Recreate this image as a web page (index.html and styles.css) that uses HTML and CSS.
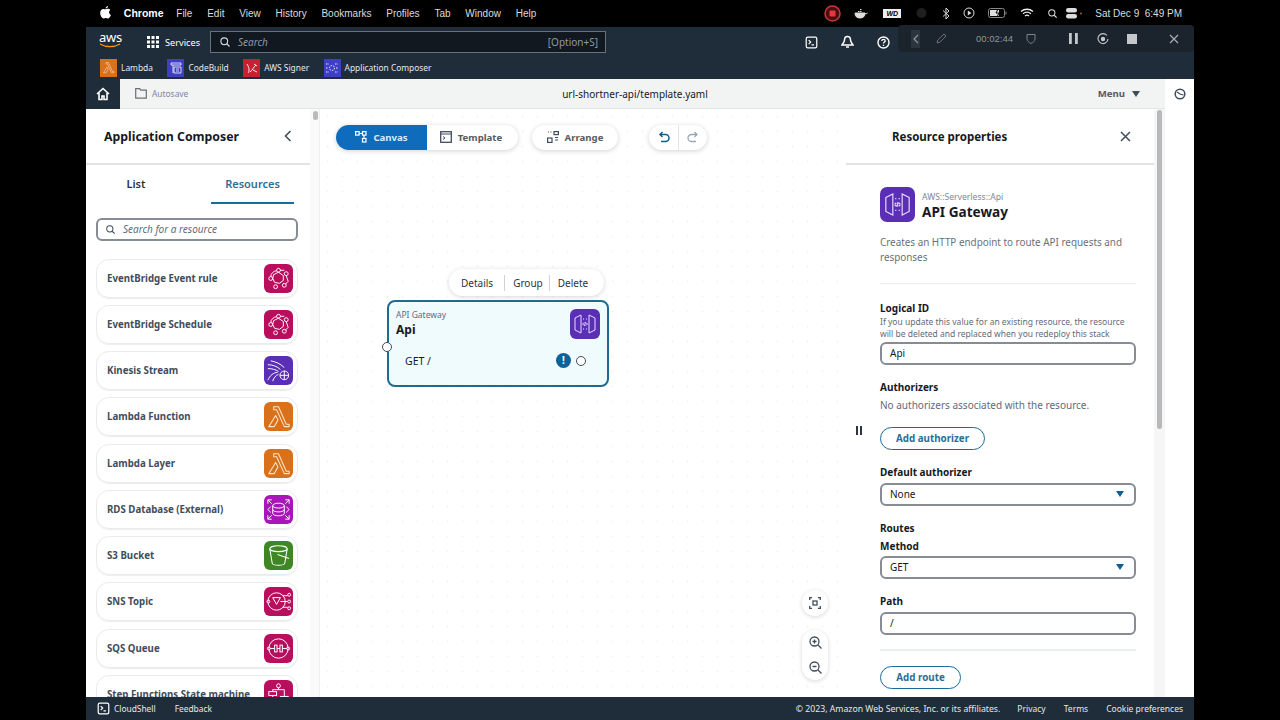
FILE: index.html
```html
<!DOCTYPE html>
<html lang="en">
<head>
    <meta charset="UTF-8">
    <title>Application Composer</title>
    <link rel="stylesheet" href="styles.css">
</head>
<body>
    <!-- shared icons -->
    <svg class="defs" width="0" height="0">
        <symbol id="i-event" viewBox="0 0 30 30"><g fill="none" stroke="#fff" stroke-width="1"><circle cx="15" cy="6.5" r="2"/><circle cx="7" cy="15" r="2"/><circle cx="23" cy="10" r="2"/><circle cx="21" cy="22" r="2"/><circle cx="12" cy="23.5" r="2"/><path d="M15 8.5 L10 11 L9 15 L11 19 L16 20 L20 17 L20 12 Z"/><path d="M17 6.5h4M23 12l2 6-3 3M7 13c0-3 3-6 6-6"/></g></symbol>
        <symbol id="i-kinesis" viewBox="0 0 30 30"><g fill="none" stroke="#fff" stroke-width="1"><path d="M7 5c5 1 10 3 14 7M4 9c5 0 10 2 13 5M4 13c4 0 8 1 11 3M4 25c2-5 6-8 10-8M9 26c1-3 3-6 6-7"/><circle cx="21" cy="20" r="4.5"/><path d="M16.5 20h9M21 15.500v9"/></g></symbol>
        <symbol id="i-lambda" viewBox="0 0 30 30"><path d="M10 5h5l8 18h3v2.500h-5L13 8h-3zM12 14l2.500 4.500-4 7H5z" fill="none" stroke="#ffe3c4" stroke-width="1.100" stroke-linejoin="round"/></symbol>
        <symbol id="i-rds" viewBox="0 0 30 30"><g fill="none" stroke="#fff" stroke-width="1"><ellipse cx="15" cy="11" rx="6" ry="2.500"/><path d="M9 11v8c0 1.500 3 2.500 6 2.500s6-1 6-2.500v-8M9 15c0 1.500 3 2.500 6 2.500s6-1 6-2.500"/><path d="M4 5h4M4 5v4M4 5l4 4M26 5h-4M26 5v4M26 5l-4 4M4 25h4M4 25v-4M4 25l4-4M26 25h-4M26 25v-4M26 25l-4-4M7 12l-3 3 3 3M23 12l3 3-3 3"/></g></symbol>
        <symbol id="i-s3" viewBox="0 0 30 30"><g fill="none" stroke="#fff" stroke-width="1.100"><ellipse cx="15" cy="8" rx="9" ry="3"/><path d="M6 8l2.500 15c.3 1.500 3 2 6.500 2s6.200-.5 6.500-2L24 8M14 14l12 4"/></g></symbol>
        <symbol id="i-sns" viewBox="0 0 30 30"><g fill="none" stroke="#fff" stroke-width="1"><circle cx="13" cy="15" r="9"/><path d="M9 11h8l-4 7z"/><circle cx="4.500" cy="15" r="1.500"/><circle cx="26" cy="8" r="1.500"/><circle cx="26" cy="15" r="1.500"/><circle cx="26" cy="22" r="1.500"/><path d="M17 15h7.500M19 9h5.500M19 21h5.500"/></g></symbol>
        <symbol id="i-sqs" viewBox="0 0 30 30"><g fill="none" stroke="#fff" stroke-width="1"><circle cx="15" cy="15" r="10"/><rect x="11" y="11.500" width="2.500" height="7"/><rect x="16.500" y="11.500" width="2.500" height="7"/><path d="M6.500 15H11M19 15h4.500M13.500 15h3"/><circle cx="5" cy="15" r="1.500"/><circle cx="25" cy="15" r="1.500"/></g></symbol>
        <symbol id="i-step" viewBox="0 0 30 30"><g fill="none" stroke="#fff" stroke-width="1"><circle cx="15" cy="6" r="2"/><rect x="5" y="12" width="8" height="4"/><rect x="17" y="17" width="8" height="4"/><rect x="5" y="22" width="8" height="4"/><path d="M15 8v2H9v2M9 16v6M15 10h6v7"/></g></symbol>
        <symbol id="i-api" viewBox="0 0 30 30"><g fill="none" stroke="#e9dcff" stroke-width="1"><path d="M5 9l6-3v18l-6-3zM25 9l-6-3v18l6-3z"/><path d="M13 10h1.500M16 10h1.500M13 20h1.500M16 20h1.500" stroke-dasharray="1 1"/><path d="M12.500 15l1.500-1.500M12.500 15l1.500 1.500M17.500 15L16 13.500M17.500 15L16 16.500M15.500 13l-1 4"/></g></symbol>
        <symbol id="i-shell" viewBox="0 0 16 16"><rect x="1.500" y="1.500" width="13" height="13" rx="2" fill="none" stroke="currentColor" stroke-width="1.500"/><path d="M4.500 5l2.500 2.500-2.500 2.500M8 11h3" fill="none" stroke="currentColor" stroke-width="1.500"/></symbol>
        <symbol id="i-search" viewBox="0 0 16 16"><circle cx="7" cy="7" r="4.500" fill="none" stroke="currentColor" stroke-width="1.500"/><path d="M10.500 10.500L14 14" stroke="currentColor" stroke-width="1.700"/></symbol>
    </svg>

    <header class="menubar">
        <nav class="menu-left">
            <svg class="apple" width="11" height="13" viewBox="0 0 11 13"><path d="M8 0c0 1.300-1 2.600-2.400 2.600C5.500 1.300 6.700.2 8 0zM5.600 3.300c.6 0 1.300-.5 2.300-.5 1 0 1.900.5 2.500 1.300-2 1.200-1.700 3.900.5 4.800-.6 1.500-1.700 3.600-3 3.600-.8 0-1.200-.5-2.100-.5-.9 0-1.400.5-2.100.5C2 12.500.2 9.500.2 7c0-2.600 1.600-4.100 3.100-4.100 1 0 1.700.4 2.300.4z" fill="#fff"/></svg>
            <b>Chrome</b><span>File</span><span>Edit</span><span>View</span><span>History</span><span>Bookmarks</span><span>Profiles</span><span>Tab</span><span>Window</span><span>Help</span>
        </nav>
        <div class="menu-right">
            <svg width="17" height="17" viewBox="0 0 17 17"><circle cx="8.500" cy="8.500" r="7.500" fill="#4a0d10" stroke="#c9373c" stroke-width="1.500"/><rect x="5.500" y="5.500" width="6" height="6" rx="1" fill="#e0393e"/></svg>
            <svg class="ms-1" width="14" height="11" viewBox="0 0 14 11"><path d="M1 5h10c0 3-1.500 5-5 5S1 8 1 5zM11 5.500c1 .5 2 0 2.500-.5" fill="#ddd" stroke="#ddd"/><path d="M4 3.500h1.500M6 3.500h1.500M6 1.500h1.500" stroke="#ddd" stroke-width="1.200"/></svg>
            <span class="wd ms-2">WD</span>
            <svg class="ms-2" width="11" height="12" viewBox="0 0 11 12"><circle cx="5.500" cy="6" r="5" fill="#1f1f1f"/></svg>
            <svg class="ms-2" width="8" height="13" viewBox="0 0 8 13"><path d="M1 3.500l6 5.500-3 3V1l3 3-6 5.500" fill="none" stroke="#ddd"/></svg>
            <svg class="ms-1" width="12" height="12" viewBox="0 0 12 12"><circle cx="6" cy="6" r="5" fill="none" stroke="#ddd"/><path d="M4.800 3.500v5L8.500 6z" fill="#ddd"/></svg>
            <svg class="ms-1" width="19" height="10" viewBox="0 0 19 10"><rect x=".5" y=".5" width="16" height="9" rx="2" fill="none" stroke="#888"/><rect x="2" y="2" width="9" height="6" fill="#ddd"/><path d="M18 3.500v3" stroke="#888"/><path d="M10 1l-2 4h3l-2 4" fill="none" stroke="#000"/></svg>
            <svg class="ms-1" width="14" height="10" viewBox="0 0 14 10"><path d="M1 3.500c3.500-3 8.500-3 12 0M3 5.800c2.500-2 5.500-2 8 0M5 8c1.200-1 2.800-1 4 0" fill="none" stroke="#eee" stroke-width="1.300"/></svg>
            <svg class="ms-1" width="11" height="11" viewBox="0 0 16 16" color="#ddd"><use href="#i-search"/></svg>
            <svg class="ms-3" width="16" height="11" viewBox="0 0 16 11"><rect x="0" y="0" width="11" height="4.500" rx="2.200" fill="#ddd"/><rect x="0" y="6" width="11" height="4.500" rx="2.200" fill="#ddd"/><circle cx="15" cy="5.500" r="1" fill="#b5562d"/></svg>
            <span class="clock">Sat Dec 9&nbsp; 6:49 PM</span>
        </div>
    </header>

    <div class="console">
        <div class="topnav">
            <div class="aws-logo">
                <span>aws</span>
                <svg width="22" height="5" viewBox="0 0 22 5"><path d="M1 1c6 3.500 14 3.500 20 0" fill="none" stroke="#f90" stroke-width="1.300"/></svg>
            </div>
            <div class="services">
                <svg width="12" height="12" viewBox="0 0 12 12" fill="#fff"><rect width="3" height="3"/><rect x="4.500" width="3" height="3"/><rect x="9" width="3" height="3"/><rect y="4.500" width="3" height="3"/><rect x="4.500" y="4.500" width="3" height="3"/><rect x="9" y="4.500" width="3" height="3"/><rect y="9" width="3" height="3"/><rect x="4.500" y="9" width="3" height="3"/><rect x="9" y="9" width="3" height="3"/></svg>
                <span>Services</span>
            </div>
            <div class="global-search">
                <svg width="12" height="12" color="#d5dbdb"><use href="#i-search"/></svg>
                <em>Search</em>
                <span>[Option+S]</span>
            </div>
            <div class="nav-icons">
                <svg width="13" height="13" color="#fff"><use href="#i-shell"/></svg>
                <svg width="13" height="14" viewBox="0 0 13 14"><path d="M6.500 1.500c2 0 3 1.500 3 3.500 0 2 1.500 3.500 2.500 5H1c1-1.500 2.500-3 2.500-5s1-3.500 3-3.500zM5 12h3" fill="none" stroke="#fff" stroke-width="1.500"/></svg>
                <svg width="13" height="13" viewBox="0 0 13 13"><circle cx="6.500" cy="6.500" r="5.500" fill="none" stroke="#fff" stroke-width="1.400"/><path d="M4.800 5c0-1 .8-1.600 1.700-1.600s1.700.6 1.700 1.500c0 1.200-1.700 1.200-1.700 2.600M6.500 8.700v1.200" fill="none" stroke="#fff" stroke-width="1.300"/></svg>
            </div>
        </div>
        <div class="favorites">
            <a class="fav"><span class="fav-icon orange"><svg width="15" height="15"><use href="#i-lambda"/></svg></span>Lambda</a>
            <a class="fav"><span class="fav-icon indigo"><svg width="14" height="14" viewBox="0 0 14 14"><path d="M2 2h10v2H2zM4 4v8M5 6h7v6H5zM7 8h3M7 10h3" fill="none" stroke="#fff" stroke-width=".8"/></svg></span>CodeBuild</a>
            <a class="fav"><span class="fav-icon crimson"><svg width="14" height="14" viewBox="0 0 14 14"><path d="M2 3c2 3 3 7 1 9M5 11c3-2 4-6 6-7M8 9l4 2M9 3l3 2" fill="none" stroke="#fff" stroke-width=".9"/></svg></span>AWS Signer</a>
            <a class="fav"><span class="fav-icon indigo"><svg width="14" height="14" viewBox="0 0 14 14"><g fill="none" stroke="#fff" stroke-width=".9" stroke-dasharray="1.500 1"><circle cx="7" cy="7" r="2.500"/><path d="M1 3h3M1 7h2M1 11h3M10 3h3M11 7h2M10 11h3"/></g></svg></span>Application Composer</a>
        </div>
        <div class="appbar-row">
            <div class="appbar">
                <button class="home"><svg width="14" height="14" viewBox="0 0 14 14"><path d="M1 7l6-5.500L13 7M3 6v6.500h3V9h2v3.500h3V6" fill="none" stroke="#fff" stroke-width="1.600"/></svg></button>
                <div class="autosave">
                    <svg width="12" height="11" viewBox="0 0 12 11"><path d="M.7.700h4l1 1.500h5.600v8H.7z" fill="none" stroke="#687078" stroke-width="1.200"/></svg>
                    <span>Autosave</span>
                </div>
                <div class="filename">url-shortner-api/template.yaml</div>
                <div class="app-menu"><span>Menu</span><i class="caret grey"></i></div>
            </div>
            <div class="rail-top">
                <svg width="12" height="12" viewBox="0 0 12 12"><circle cx="6" cy="6" r="4.800" fill="none" stroke="#414d5c" stroke-width="1.500"/><path d="M3 4l3 2 3.500 1" fill="none" stroke="#414d5c" stroke-width="1.300"/></svg>
            </div>
        </div>

        <main class="workspace">
            <aside class="left-panel">
                <div class="panel-head">
                    <h2>Application Composer</h2>
                    <svg width="8" height="12" viewBox="0 0 8 12"><path d="M6.500 1L1.500 6l5 5" fill="none" stroke="#414d5c" stroke-width="1.600"/></svg>
                </div>
                <div class="tabs">
                    <span class="tab">List</span>
                    <span class="tab active">Resources</span>
                </div>
                <div class="res-search">
                    <svg width="11" height="11" color="#414d5c"><use href="#i-search"/></svg>
                    <em>Search for a resource</em>
                </div>
                <div class="res-list">
                    <div class="res-card"><span>EventBridge Event rule</span><svg class="res-icon pink" width="29" height="29"><use href="#i-event"/></svg></div>
                    <div class="res-card"><span>EventBridge Schedule</span><svg class="res-icon pink" width="29" height="29"><use href="#i-event"/></svg></div>
                    <div class="res-card"><span>Kinesis Stream</span><svg class="res-icon violet" width="29" height="29"><use href="#i-kinesis"/></svg></div>
                    <div class="res-card"><span>Lambda Function</span><svg class="res-icon orange" width="29" height="29"><use href="#i-lambda"/></svg></div>
                    <div class="res-card"><span>Lambda Layer</span><svg class="res-icon orange" width="29" height="29"><use href="#i-lambda"/></svg></div>
                    <div class="res-card"><span>RDS Database (External)</span><svg class="res-icon magenta" width="29" height="29"><use href="#i-rds"/></svg></div>
                    <div class="res-card"><span>S3 Bucket</span><svg class="res-icon green" width="29" height="29"><use href="#i-s3"/></svg></div>
                    <div class="res-card"><span>SNS Topic</span><svg class="res-icon pink" width="29" height="29"><use href="#i-sns"/></svg></div>
                    <div class="res-card"><span>SQS Queue</span><svg class="res-icon pink" width="29" height="29"><use href="#i-sqs"/></svg></div>
                    <div class="res-card"><span>Step Functions State machine</span><svg class="res-icon pink" width="29" height="29"><use href="#i-step"/></svg></div>
                </div>
            </aside>
            <div class="gutter"><i></i></div>

            <section class="canvas">
                <div class="toolbar">
                    <div class="pill-group">
                        <button class="tool selected canvas-btn">
                            <svg width="12" height="12" viewBox="0 0 12 12"><g fill="none" stroke="#fff" stroke-width="1.200"><rect x=".6" y=".6" width="3.500" height="3.500"/><rect x="7.500" y=".6" width="3.500" height="3.500"/><rect x="7.500" y="7.500" width="3.500" height="3.500"/><path d="M4 2.500h3.500M9 4v3.500"/></g></svg>Canvas
                        </button>
                        <button class="tool template-btn">
                            <svg width="12" height="12" viewBox="0 0 12 12"><rect x=".7" y=".7" width="10.600" height="10.600" fill="none" stroke="#414d5c" stroke-width="1.300"/><path d="M.7 3h10.600M3 5.500l2 1.500-2 1.500" fill="none" stroke="#414d5c"/></svg>Template
                        </button>
                    </div>
                    <div class="pill-group">
                        <button class="tool arrange-btn">
                            <svg width="12" height="12" viewBox="0 0 12 12" fill="none" stroke="#414d5c" stroke-width="1.200"><rect x=".6" y="7" width="4.400" height="4.400"/><rect x="7" y=".6" width="4.400" height="3"/><path d="M1 1h1M3.500 1h1M8 6.500h3M8 9h3" /></svg>Arrange
                        </button>
                    </div>
                    <div class="pill-group history">
                        <button class="tool round"><svg width="12" height="12" viewBox="0 0 12 12"><path d="M4.500 1L2 3.500 4.500 6M2 3.500h5.500a3.500 3.500 0 010 7H3" fill="none" stroke="#0f5f93" stroke-width="1.500"/></svg></button>
                        <button class="tool round"><svg width="12" height="12" viewBox="0 0 12 12"><path d="M7.500 1L10 3.500 7.500 6M10 3.500H4.500a3.500 3.500 0 000 7H9" fill="none" stroke="#9ba7b6" stroke-width="1.300"/></svg></button>
                    </div>
                </div>

                <!-- node sits freely on the canvas -->
                <div class="node-actions"><span>Details</span><span>Group</span><span>Delete</span></div>
                <div class="node">
                    <i class="port port-in"></i>
                    <div class="node-head">
                        <div>
                            <small>API Gateway</small>
                            <strong>Api</strong>
                        </div>
                        <svg class="res-icon violet" width="30" height="30"><use href="#i-api"/></svg>
                    </div>
                    <div class="node-route">
                        <span>GET /</span>
                        <b class="alert">!</b>
                        <i class="port"></i>
                    </div>
                </div>

                <div class="zoom-fit">
                    <svg width="12" height="12" viewBox="0 0 12 12" fill="none" stroke="#414d5c" stroke-width="1.300"><path d="M.7 3V.7H3M9 .7h2.300V3M11.300 9v2.300H9M3 11.300H.7V9"/><rect x="4" y="4" width="4" height="4"/></svg>
                </div>
                <div class="zoom-group">
                    <svg width="13" height="13" viewBox="0 0 13 13" fill="none" stroke="#414d5c" stroke-width="1.300"><circle cx="5.500" cy="5.500" r="4.500"/><path d="M9 9l3.500 3.500M3.500 5.500h4M5.500 3.500v4"/></svg>
                    <svg width="13" height="13" viewBox="0 0 13 13" fill="none" stroke="#414d5c" stroke-width="1.300"><circle cx="5.500" cy="5.500" r="4.500"/><path d="M9 9l3.500 3.500M3.500 5.500h4"/></svg>
                </div>
                <i class="drag-handle"></i>
            </section>

            <aside class="right-panel">
                <div class="props-head">
                    <h2>Resource properties</h2>
                    <svg width="11" height="11" viewBox="0 0 11 11"><path d="M1 1l9 9M10 1l-9 9" stroke="#414d5c" stroke-width="1.500"/></svg>
                </div>
                <div class="props-body">
                    <div class="res-title">
                        <svg class="res-icon violet big" width="35" height="35"><use href="#i-api"/></svg>
                        <div>
                            <small>AWS::Serverless::Api</small>
                            <h3>API Gateway</h3>
                        </div>
                    </div>
                    <p class="res-desc">Creates an HTTP endpoint to route API requests and responses</p>
                    <hr class="rule">
                    <label class="field-label first">Logical ID</label>
                    <p class="help">If you update this value for an existing resource, the resource will be deleted and replaced when you redeploy this stack</p>
                    <div class="input logical">Api</div>
                    <label class="field-label authorizers">Authorizers</label>
                    <p class="empty">No authorizers associated with the resource.</p>
                    <button class="outline add-auth">Add authorizer</button>
                    <label class="field-label default-auth">Default authorizer</label>
                    <div class="input select">None<i class="caret"></i></div>
                    <label class="field-label routes">Routes</label>
                    <label class="field-label method">Method</label>
                    <div class="input select">GET<i class="caret"></i></div>
                    <label class="field-label path">Path</label>
                    <div class="input">/</div>
                    <hr class="rule route-rule">
                    <button class="outline add-route">Add route</button>
                </div>
            </aside>
            <div class="props-scroll"><i></i></div>
            <div class="rail"></div>
        </main>

        <footer class="bottombar">
            <div class="foot-left">
                <svg width="13" height="13" color="#fff"><use href="#i-shell"/></svg>
                <span>CloudShell</span>
                <span class="feedback">Feedback</span>
            </div>
            <div class="foot-right">
                <span class="copy">© 2023, Amazon Web Services, Inc. or its affiliates.</span>
                <span class="privacy">Privacy</span>
                <span class="terms">Terms</span>
                <span class="cookies">Cookie preferences</span>
            </div>
        </footer>
    </div>

    <!-- screen recorder overlay -->
    <div class="recorder">
        <span class="rec-back"><svg width="6" height="10" viewBox="0 0 6 10"><path d="M5 1L1 5l4 4" fill="none" stroke="#8d949c" stroke-width="1.200"/></svg></span>
        <svg class="rec-pen" width="11" height="11" viewBox="0 0 11 11"><path d="M1 10l.8-3L8 1l2 2-6 6.200z" fill="none" stroke="#6b7178"/></svg>
        <span class="rec-time">00:02:44</span>
        <svg class="rec-shield" width="10" height="11" viewBox="0 0 10 11"><path d="M1 1.500h8V6c0 2-2 3.500-4 4.500C3 9.500 1 8 1 6z" fill="none" stroke="#7d848c"/></svg>
        <svg class="rec-pause" width="9" height="11" viewBox="0 0 9 11" fill="#c4c7ca"><rect width="2.800" height="11"/><rect x="6" width="2.800" height="11"/></svg>
        <svg class="rec-restart" width="12" height="12" viewBox="0 0 12 12"><path d="M10 2.500A5 5 0 1011 6" fill="none" stroke="#b8bcc0" stroke-width="1.200"/><circle cx="6" cy="6" r="2.200" fill="#c4c7ca"/></svg>
        <i class="rec-stop"></i>
        <svg class="rec-close" width="10" height="10" viewBox="0 0 10 10"><path d="M1 1l8 8M9 1L1 9" stroke="#a9adb2" stroke-width="1.200"/></svg>
    </div>
</body>
</html>
```

FILE: styles.css
```css
* {
    margin: 0;
    padding: 0;
    box-sizing: border-box;
}
body {
    width: 1280px;
    height: 720px;
    overflow: hidden;
    position: relative;
    background-color: #000;
    font-family: 'Noto Sans', 'Open Sans', sans-serif;
    color: #16191f;
}
svg {
    display: block;
    flex: none;
}
.defs {
    position: absolute;
}
button {
    font-family: inherit;
    border: none;
    background: none;
}

/* mac menu bar */
.menubar {
    height: 27px;
    display: flex;
    align-items: center;
    justify-content: space-between;
    padding: 0 98px 1px 100px;
    font-family: 'Liberation Sans', 'Inter', sans-serif;
    font-size: 10px;
    color: #dcdcdc;
}
.menu-left {
    display: flex;
    align-items: center;
    gap: 14.800px;
}
.menu-left b {
    color: #fff;
    font-size: 10.5px;
    margin-left: -2px;
    margin-right: -2px;
}
.apple {
    margin-top: -2px;
}
.menu-right {
    display: flex;
    align-items: center;
}
.wd {
    width: 18px;
    height: 9px;
    background-color: #eee;
    color: #000;
    font-size: 7px;
    font-weight: 700;
    font-style: italic;
    line-height: 9px;
    text-align: center;
}
.ms-1 { margin-left: 13px; }
.ms-2 { margin-left: 15px; }
.ms-3 { margin-left: 8px; }
.clock {
    margin-left: 13px;
    font-size: 10px;
}

/* console shell */
.console {
    width: 1108px;
    margin-left: 86px;
    height: 693px;
    display: flex;
    flex-direction: column;
    background-color: #fff;
}
.topnav {
    height: 27px;
    background-color: #1f2d3a;
    display: flex;
    align-items: center;
    padding: 3px 0 0 13px;
    flex: none;
}
.aws-logo {
    width: 23px;
    color: #fff;
    font-size: 13px;
    line-height: 11px;
    letter-spacing: -.2px;
}
.aws-logo span {
    display: block;
    margin-top: -4px;
}
.services {
    display: flex;
    align-items: center;
    gap: 6px;
    margin-left: 25px;
    width: 63px;
    color: #fff;
    font-size: 9.200px;
}
.global-search {
    width: 396px;
    height: 22px;
    border: 1px solid #687078;
    background-color: #12181f;
    display: flex;
    align-items: center;
    padding: 0 7px 0 8px;
    font-size: 10px;
    color: #8d99a8;
}
.global-search em {
    margin-left: 7px;
    flex: 1;
}
.nav-icons {
    display: flex;
    align-items: center;
    gap: 23px;
    margin-left: 199px;
}
.favorites {
    height: 25px;
    background-color: #1f2d3a;
    display: flex;
    align-items: center;
    padding: 2px 0 0 14px;
    flex: none;
    color: #e6e8ea;
    font-size: 8.400px;
}
.fav {
    display: flex;
    align-items: center;
    gap: 4px;
    margin-right: 14.500px;
}
.fav-icon {
    width: 17px;
    height: 18px;
    display: flex;
    align-items: center;
    justify-content: center;
}
.fav-icon.orange { background-color: #d9701a; }
.fav-icon.indigo { background-color: #3f3fc4; }
.fav-icon.crimson { background-color: #c7202f; }

/* app header */
.appbar-row {
    height: 30px;
    display: flex;
    flex: none;
}
.appbar {
    width: 1079px;
    background-color: #f2f3f3;
    display: flex;
    align-items: center;
    position: relative;
    border-bottom: 1px solid #e4e6e6;
}
.home {
    width: 34px;
    height: 30px;
    background-color: #1f2d3a;
    display: flex;
    align-items: center;
    justify-content: center;
}
.autosave {
    display: flex;
    align-items: center;
    gap: 5px;
    margin-left: 15px;
    font-size: 8.400px;
    color: #7d8998;
}
.filename {
    position: absolute;
    left: 0;
    right: 0;
    margin-left: 19px;
    text-align: center;
    font-size: 10px;
    color: #16191f;
    pointer-events: none;
}
.app-menu {
    margin-left: auto;
    margin-right: 25px;
    display: flex;
    align-items: center;
    gap: 7px;
    font-size: 9.600px;
    font-weight: 700;
    color: #545b64;
}
.caret {
    display: block;
    width: 0;
    height: 0;
    border-left: 4.500px solid transparent;
    border-right: 4.500px solid transparent;
    border-top: 6px solid #0f5f93;
}
.caret.grey {
    border-top-color: #414d5c;
}
.rail-top {
    flex: 1;
    background-color: #fff;
    display: flex;
    align-items: center;
    justify-content: center;
}

/* main area */
.workspace {
    flex: 1;
    min-height: 0;
    display: flex;
    overflow: hidden;
}
.left-panel {
    width: 224px;
    flex: none;
    background-color: #fff;
    overflow: hidden;
}
.panel-head {
    height: 56px;
    padding: 0 18px;
    display: flex;
    align-items: center;
    justify-content: space-between;
    border-bottom: 2px solid #e2e4e6;
}
.panel-head h2 {
    font-size: 12.300px;
    font-weight: 700;
}
.tabs {
    display: flex;
    justify-content: space-between;
    height: 39px;
    margin: 0 16px 0 10px;
}
.tab {
    width: 80px;
    text-align: center;
    font-size: 11px;
    font-weight: 600;
    line-height: 38px;
    color: #2c3440;
    height: 39px;
}
.tab.active {
    width: 83px;
    color: #2a6f97;
    border-bottom: 2px solid #1a6a9a;
}
.res-search {
    height: 23px;
    margin: 14px 12px 0 10px;
    border: 2px solid #868c93;
    border-radius: 6px;
    display: flex;
    align-items: center;
    gap: 7px;
    padding-left: 7px;
    padding-bottom: 1px;
    font-size: 10px;
    color: #5f6b7a;
}
.res-list {
    margin: 17.500px 12px 0 10px;
    display: flex;
    flex-direction: column;
    gap: 7.250px;
}
.res-card {
    height: 39px;
    flex: none;
    border: 1px solid #e9ebed;
    border-radius: 13px;
    box-shadow: 0 1px 1px #eee;
    display: flex;
    align-items: center;
    justify-content: space-between;
    padding: 0 4px 0 10px;
    font-size: 9.700px;
    font-weight: 700;
    color: #414d5c;
}
.res-icon {
    border-radius: 6px;
}
.res-icon.big {
    border-radius: 7px;
}
.pink { background-color: #b90d5e; }
.violet { background-color: #5a2fb5; }
.orange { background-color: #d9701a; }
.magenta { background-color: #a815b8; }
.green { background-color: #3f8624; }
.gutter {
    width: 10px;
    flex: none;
    background-color: #fafafa;
    border-right: 1px solid #eee;
    padding: 2px 3px 0;
}
.gutter i {
    display: block;
    width: 5px;
    height: 9px;
    border-radius: 3px;
    background-color: #b8babc;
}

/* canvas */
.canvas {
    width: 526px;
    flex: none;
    position: relative;
    background-color: #fff;
    background-image: radial-gradient(#f7f7f8 1px, transparent 1.2px);
    background-size: 15px 15px;
}
.toolbar {
    display: flex;
    gap: 14px;
    padding: 16px 0 0 16px;
}
.toolbar .history {
    margin-left: 17px;
}
.pill-group {
    display: flex;
    height: 25px;
    border-radius: 13px;
    background-color: #fff;
    box-shadow: 0 1px 5px rgba(0, 0, 0, 0.18);
    overflow: hidden;
}
.tool {
    height: 25px;
    padding-bottom: 1px;
    display: flex;
    align-items: center;
    justify-content: center;
    gap: 6px;
    font-size: 9.600px;
    font-weight: 700;
    color: #545b64;
}
.tool.selected {
    background-color: #0f6cbd;
    color: #d8ecfa;
}
.canvas-btn { width: 91px; }
.template-btn { width: 91px; padding-right: 3px; }
.arrange-btn { width: 86px; }
.tool.round {
    width: 29px;
}
.tool.round + .tool.round {
    border-left: 1px solid #e2e4e6;
}
.node-actions {
    position: absolute;
    left: 129px;
    top: 160px;
    width: 155px;
    height: 27px;
    border-radius: 14px;
    background-color: #fff;
    box-shadow: 0 1px 5px rgba(0, 0, 0, 0.16);
    display: flex;
    align-items: center;
    padding-left: 12px;
    font-size: 10px;
    color: #2c3440;
}
.node-actions span:first-child {
    margin-right: 11px;
}
.node-actions span:nth-child(2) {
    margin-right: 6px;
}
.node-actions span + span {
    border-left: 1px solid #cfd3d7;
    padding-left: 8px;
    line-height: 16px;
}
.node {
    position: absolute;
    left: 67px;
    top: 191px;
    width: 222px;
    height: 87px;
    border: 2px solid #1d6b8f;
    border-radius: 8px;
    background-color: #f0fbfe;
    padding: 7px 7px 0 7px;
}
.node-head {
    display: flex;
    justify-content: space-between;
}
.node-head small {
    display: block;
    font-size: 8.500px;
    line-height: 12px;
    color: #5f6b7a;
}
.node-head strong {
    display: block;
    font-size: 12px;
    line-height: 17px;
}
.node-route {
    display: flex;
    align-items: center;
    margin-top: 14px;
    padding: 0 14px 0 9px;
    font-size: 10.500px;
    color: #16191f;
}
.node-route span {
    flex: 1;
}
.alert {
    width: 15px;
    height: 15px;
    border-radius: 50%;
    background-color: #0f6299;
    color: #fff;
    font-size: 10px;
    line-height: 15px;
    text-align: center;
    margin-right: 5px;
}
.port {
    display: block;
    width: 10px;
    height: 10px;
    border-radius: 50%;
    border: 1.500px solid #414d5c;
    background-color: #fff;
}
.port-in {
    position: absolute;
    left: -7px;
    top: 40px;
}
.zoom-fit {
    position: absolute;
    left: 482px;
    top: 481px;
    width: 26px;
    height: 26px;
    border-radius: 50%;
    background-color: #fff;
    box-shadow: 0 1px 4px rgba(0, 0, 0, 0.16);
    display: flex;
    align-items: center;
    justify-content: center;
}
.zoom-group {
    position: absolute;
    left: 482px;
    top: 521px;
    width: 26px;
    height: 50px;
    border-radius: 13px;
    background-color: #fff;
    box-shadow: 0 1px 4px rgba(0, 0, 0, 0.16);
    display: flex;
    flex-direction: column;
    align-items: center;
    justify-content: space-around;
}
.drag-handle {
    position: absolute;
    right: -16px;
    top: 317px;
    width: 6px;
    height: 9px;
    border-left: 2px solid #2c3440;
    border-right: 2px solid #2c3440;
    z-index: 2;
}

/* resource properties */
.right-panel {
    width: 308px;
    flex: none;
    background-color: #fff;
    box-shadow: -1px 0 3px rgba(0, 0, 0, 0.08);
    overflow: hidden;
}
.props-head {
    height: 56px;
    padding: 0 23px 0 46px;
    display: flex;
    align-items: center;
    justify-content: space-between;
    border-bottom: 2px solid #e2e4e6;
}
.props-head h2 {
    font-size: 11.500px;
    font-weight: 700;
}
.props-body {
    padding: 22px 18px 0 34px;
}
.res-title {
    display: flex;
    gap: 7px;
}
.res-title small {
    display: block;
    font-size: 8.600px;
    line-height: 12px;
    margin-top: 4px;
    color: #7d8998;
}
.res-title h3 {
    font-size: 13.600px;
    line-height: 18px;
    font-weight: 700;
}
.res-desc {
    margin-top: 13px;
    font-size: 9.900px;
    line-height: 15px;
    color: #687078;
}
.rule {
    border: none;
    border-top: 1px solid #eaeded;
    margin-top: 18px;
}
.field-label {
    display: block;
    font-size: 10px;
    line-height: 13px;
    font-weight: 700;
}
.field-label.first { margin-top: 18px; }
.help {
    font-size: 8.500px;
    line-height: 11.500px;
    color: #5f6b7a;
    margin-top: 1px;
}
.input {
    height: 23px;
    margin-top: 4px;
    border: 2px solid #868c93;
    border-radius: 6px;
    background-color: #fff;
    padding: 0 10px 2px 8px;
    font-size: 10px;
    line-height: 18px;
    color: #16191f;
    display: flex;
    align-items: center;
    justify-content: space-between;
}
.input.logical { margin-top: 3px; }
.field-label.authorizers { margin-top: 16px; }
.empty {
    margin-top: 4px;
    font-size: 10px;
    line-height: 14px;
    color: #5f6b7a;
}
.outline {
    display: block;
    height: 23px;
    padding-bottom: 1px;
    border: 1.500px solid #1a6a9a;
    border-radius: 12px;
    font-size: 9.800px;
    font-weight: 700;
    color: #2a6f97;
    background-color: #fff;
}
.add-auth {
    width: 105px;
    margin-top: 15px;
}
.add-route {
    width: 81px;
    margin-top: 15px;
}
.field-label.default-auth { margin-top: 16px; }
.field-label.routes { margin-top: 16px; }
.field-label.method { margin-top: 5px; }
.field-label.method + .input { margin-top: 3px; }
.field-label.path { margin-top: 16px; }
.route-rule {
    border-top: 2px solid #eaeded;
    margin-top: 14px;
}
.props-scroll {
    width: 11px;
    flex: none;
    background-color: #f6f6f6;
    padding: 1px 3px 0;
}
.props-scroll i {
    display: block;
    height: 319px;
    background-color: #b7b9bb;
    border-radius: 3px;
}
.rail {
    flex: 1;
    background-color: #fff;
}

/* footer */
.bottombar {
    height: 23px;
    flex: none;
    background-color: #1f2d3a;
    display: flex;
    align-items: center;
    justify-content: space-between;
    padding: 0 11px;
    font-size: 8.500px;
    color: #e6e8ea;
    position: relative;
}
.foot-left, .foot-right {
    display: flex;
    align-items: center;
}
.foot-left {
    font-size: 8.400px;
}
.foot-left span {
    margin-left: 4px;
}
.foot-left .feedback {
    margin-left: 19px;
}
.copy { font-size: 8.700px; }
.privacy { margin-left: 17px; }
.terms { margin-left: 18px; }
.cookies { margin-left: 18px; }

/* recorder overlay */
.recorder {
    position: absolute;
    left: 898px;
    top: 25px;
    width: 296px;
    height: 27px;
    background-color: #1b232c;
    border-radius: 4px;
    display: flex;
    align-items: center;
}
.rec-back {
    width: 9px;
    height: 18px;
    margin-left: 13px;
    background-color: #2c343d;
    display: flex;
    align-items: center;
    justify-content: center;
}
.rec-pen { margin-left: 16px; }
.rec-time {
    margin-left: 29px;
    font-family: 'Liberation Sans', 'Inter', sans-serif;
    font-size: 9.500px;
    color: #8d949c;
}
.rec-shield { margin-left: 13px; }
.rec-pause { margin-left: 33px; }
.rec-restart { margin-left: 19px; }
.rec-stop {
    display: block;
    width: 10px;
    height: 10px;
    margin-left: 18px;
    background-color: #c4c7ca;
}
.rec-close { margin-left: 32px; }
```
